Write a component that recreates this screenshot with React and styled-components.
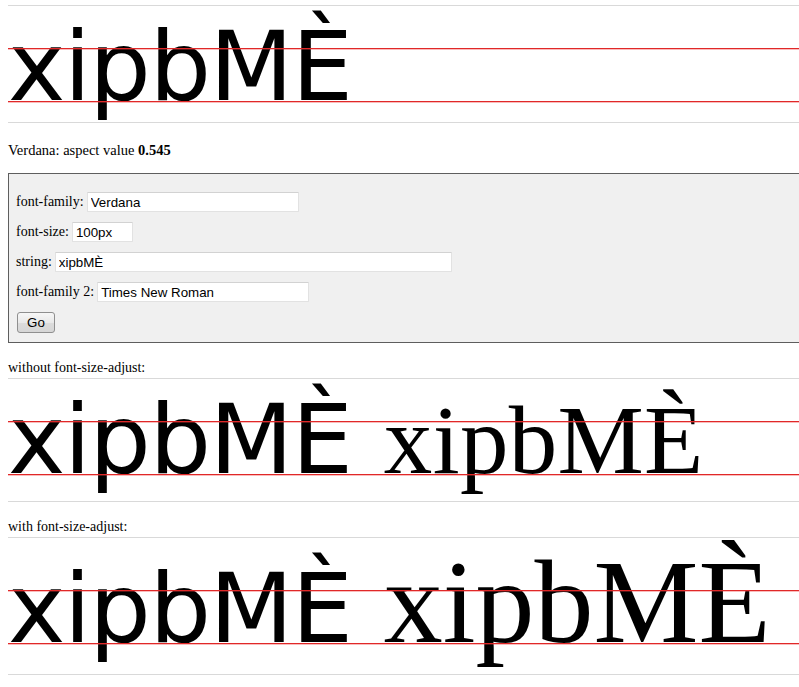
import React from 'react';
import styled, { createGlobalStyle } from 'styled-components';

const GlobalStyle = createGlobalStyle`
  html, body {
    margin: 0;
    overflow: hidden;
    background: #fff;
  }
  body {
    padding: 0 0 0 8px;
    font-family: "Liberation Serif", "Times New Roman", serif;
    color: #000;
  }
`;

const Page = styled.div`
  width: 100%;
`;

// a strip of sample text between two pale rules, with red guides at x-height and baseline
const Sample = styled.div`
  position: relative;
  box-sizing: content-box;
  height: ${p => p.$height}px;
  padding-top: ${p => p.$pad}px;
  margin-top: ${p => p.$marginTop || 0}px;
  margin-right: -10px;
  border-top: 1px solid #d9d9d9;
  border-bottom: 1px solid #d9d9d9;
  font-family: "DejaVu Sans", Verdana, sans-serif;
  font-size: 97px;
  line-height: 100px;
  white-space: nowrap;
  overflow: hidden;
`;

const SampleInner = styled.div`
  height: ${p => p.$height}px;
`;

const Guide = styled.div`
  position: absolute;
  left: 0;
  right: 0;
  top: ${p => p.$top}px;
  height: 1px;
  background: #e02828;
  box-shadow: 0 1px 0 rgba(240, 60, 60, 0.35);
  z-index: 2;
`;

const SansText = styled.span`
  font-family: "DejaVu Sans", Verdana, sans-serif;
  font-size: 97px;
  letter-spacing: -1.5px;
`;

const SerifText = styled.span`
  font-family: "Liberation Serif", "Times New Roman", serif;
  font-size: ${p => p.$size}px;
  letter-spacing: ${p => p.$spacing}px;
  margin-left: 3px;
`;

const Caption = styled.div`
  font-size: ${p => p.$size || 14}px;
  line-height: 20px;
  padding-top: ${p => p.$pad}px;
  margin-bottom: ${p => p.$after || 0}px;
`;

const FormBox = styled.form`
  margin: 0 -10px 0 0;
  padding: 13px 7px 4px;
  background: #f0f0f0;
  border: 1px solid #5e5e5e;
`;

const Row = styled.div`
  display: flex;
  align-items: center;
  gap: 3px;
  height: ${p => p.$height || 30}px;
`;

const Label = styled.label`
  font-size: 14px;
  white-space: nowrap;
`;

const TextInput = styled.input`
  box-sizing: border-box;
  width: ${p => p.$width}px;
  height: 20px;
  margin: 0;
  padding: 0 3px;
  background: #fff;
  border: 1px solid #e2e2e2;
  border-top-color: #d2d2d2;
  border-radius: 1px;
  font-family: "Liberation Sans", Arial, sans-serif;
  font-size: 13.33px;
  color: #000;
  outline: none;
`;

const GoButton = styled.button`
  box-sizing: border-box;
  width: 38px;
  height: 21px;
  margin-left: 1px;
  padding: 0;
  border: 1px solid #8f8f8f;
  border-radius: 3px;
  background: linear-gradient(#f7f7f7, #e9e9e9 50%, #dcdcdc 51%, #d6d6d6);
  font-family: "Liberation Sans", Arial, sans-serif;
  font-size: 13.33px;
  color: #000;
`;

const WORD = 'xipbMÈ';

const SampleStrip = ({ height, pad, baseline, marginTop, serifSize, serifSpacing }) => (
  <Sample $height={height - pad} $pad={pad} $marginTop={marginTop}>
    <Guide $top={baseline - 53} />
    <Guide $top={baseline} />
    <SampleInner $height={height - pad}>
      <SansText>{WORD} </SansText>
      {serifSize && <SerifText $size={serifSize} $spacing={serifSpacing}>{WORD}</SerifText>}
    </SampleInner>
  </Sample>
);

const FIELDS = [
  { label: 'font-family:', value: 'Verdana', width: 212 },
  { label: 'font-size:', value: '100px', width: 61 },
  { label: 'string:', value: 'xipbMÈ', width: 397 },
  { label: 'font-family 2:', value: 'Times New Roman', width: 212 }
];

export default function App() {
  return (
    <Page>
      <GlobalStyle />
      <SampleStrip height={116} pad={11} baseline={95} marginTop={5} />
      <Caption $size={14.5} $pad={17} $after={13}>
        Verdana: aspect value <b>0.545</b>
      </Caption>
      <FormBox onSubmit={e => e.preventDefault()}>
        {FIELDS.map(field => (
          <Row key={field.label}>
            <Label>{field.label}</Label>
            <TextInput $width={field.width} defaultValue={field.value} />
          </Row>
        ))}
        <Row $height={31}>
          <GoButton type="submit">Go</GoButton>
        </Row>
      </FormBox>
      <Caption $pad={15}>without font-size-adjust:</Caption>
      <SampleStrip height={122} pad={11} baseline={95} serifSize={97} serifSpacing={0.3} />
      <Caption $pad={15}>with font-size-adjust:</Caption>
      <SampleStrip height={136} pad={15} baseline={105} serifSize={118} serifSpacing={0} />
    </Page>
  );
}
